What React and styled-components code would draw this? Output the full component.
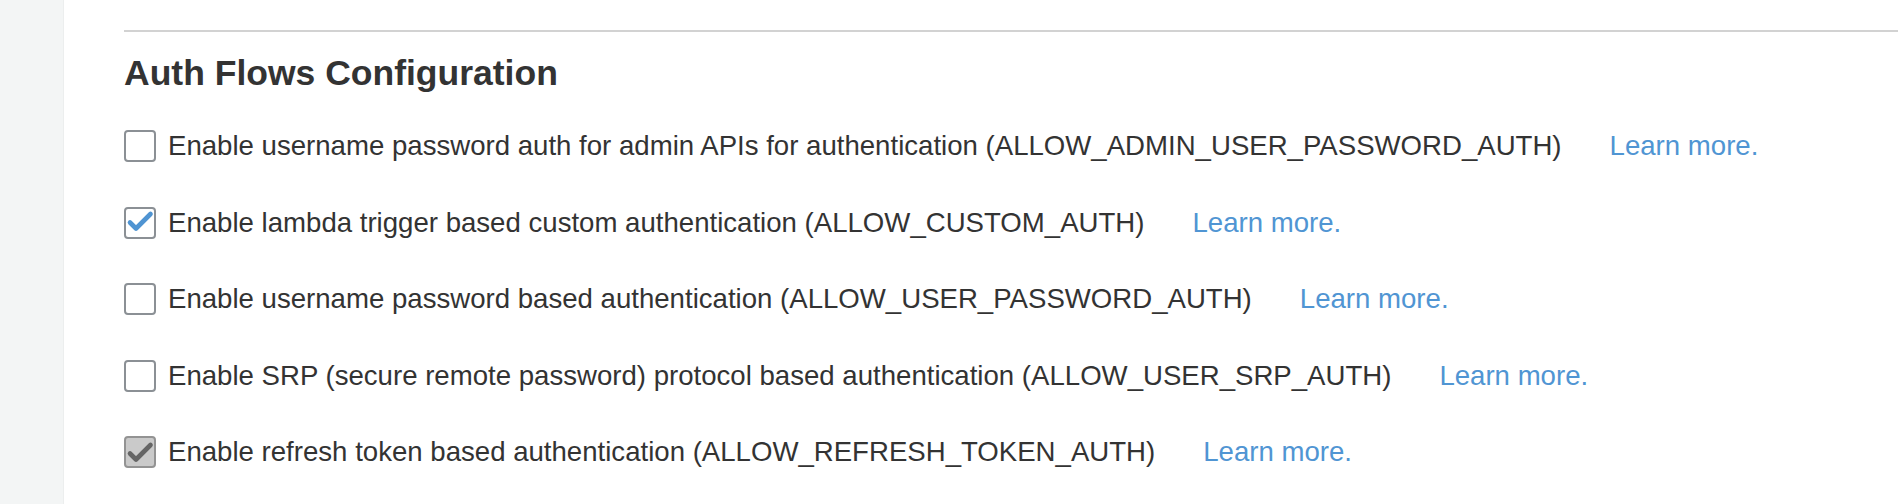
import React from "react";
import styled, { createGlobalStyle } from "styled-components";

const Global = createGlobalStyle`
  html, body { margin: 0; padding: 0; background: #ffffff; }
  body { font-family: "Liberation Sans", Arial, Helvetica, sans-serif; color: #333333; }
  #root { min-height: 100vh; }
`;

const Page = styled.div`
  display: flex;
  min-height: 100vh;
  overflow: hidden;
`;

const SideStrip = styled.aside`
  flex: 0 0 63px;
  background: #f3f5f5;
  border-right: 1px solid #eceeee;
`;

const Main = styled.main`
  flex: 1;
  padding: 30px 0 0 60px;
`;

const Divider = styled.hr`
  margin: 0;
  border: 0;
  height: 2px;
  background: #d2d2d2;
`;

const Heading = styled.h2`
  margin: 20px 0 0;
  font-size: 35.5px;
  line-height: 42px;
  font-weight: 700;
  color: #333333;
  letter-spacing: 0;
`;

const List = styled.div`
  display: flex;
  flex-direction: column;
  gap: 44.5px;
  margin-top: 36px;
`;

const Row = styled.label`
  display: flex;
  align-items: center;
  height: 32px;
  font-size: 27.6px;
  line-height: 40px;
  color: #333333;
  white-space: nowrap;
`;

const Box = styled.span`
  box-sizing: border-box;
  flex: 0 0 32px;
  width: 32px;
  height: 32px;
  border: 2px solid ${(p) => (p.$disabled ? "#939393" : "#8b9095")};
  border-radius: 4px;
  background: ${(p) => (p.$disabled ? "#cacaca" : "#ffffff")};
  display: flex;
  align-items: center;
  justify-content: center;
  margin-right: 12px;
`;

const Label = styled.span``;

const Link = styled.a`
  margin-left: 48px;
  color: #5095d3;
  text-decoration: none;
  cursor: pointer;
`;

const Check = ({ color, offset }) => (
  <svg width="28" height="28" viewBox="0 0 28 28" style={{ transform: `translateY(${offset}px)` }}>
    <path
      d="M4 13.5 L10 19.5 L24.5 5"
      fill="none"
      stroke={color}
      strokeWidth="4.6"
      strokeLinecap="round"
      strokeLinejoin="round"
    />
  </svg>
);

const flows = [
  {
    text: "Enable username password auth for admin APIs for authentication (ALLOW_ADMIN_USER_PASSWORD_AUTH)",
    state: "off",
  },
  {
    text: "Enable lambda trigger based custom authentication (ALLOW_CUSTOM_AUTH)",
    state: "on",
  },
  {
    text: "Enable username password based authentication (ALLOW_USER_PASSWORD_AUTH)",
    state: "off",
  },
  {
    text: "Enable SRP (secure remote password) protocol based authentication (ALLOW_USER_SRP_AUTH)",
    state: "off",
  },
  {
    text: "Enable refresh token based authentication (ALLOW_REFRESH_TOKEN_AUTH)",
    state: "disabled",
  },
];

export default function App() {
  return (
    <>
      <Global />
      <Page>
        <SideStrip />
        <Main>
          <Divider />
          <Heading>Auth Flows Configuration</Heading>
          <List>
            {flows.map((f) => (
              <Row key={f.text}>
                <Box $disabled={f.state === "disabled"}>
                  {f.state === "on" && <Check color="#4f94d2" offset={0} />}
                  {f.state === "disabled" && <Check color="#656565" offset={2} />}
                </Box>
                <Label>{f.text}</Label>
                <Link>Learn more.</Link>
              </Row>
            ))}
          </List>
        </Main>
      </Page>
    </>
  );
}
